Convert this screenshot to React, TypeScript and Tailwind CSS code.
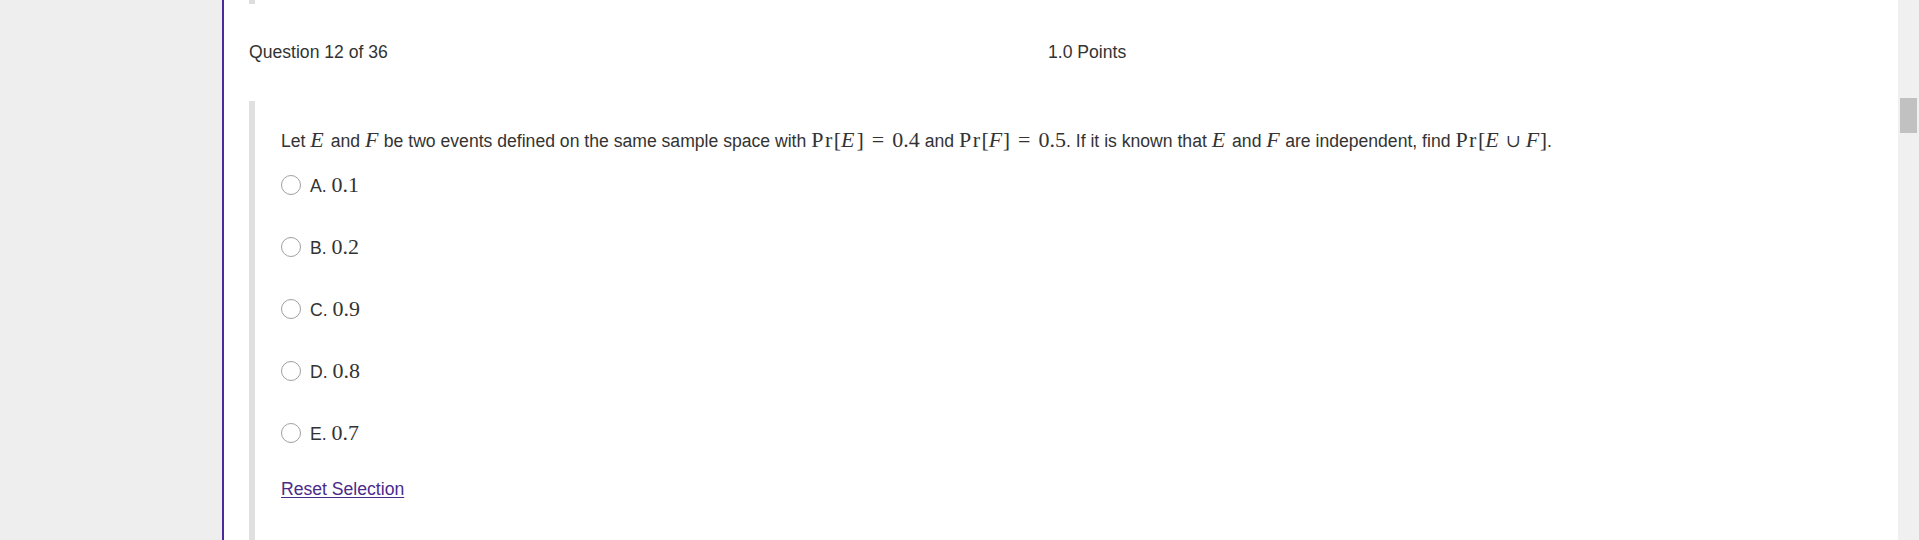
import React from "react";

const serif = "font-['Liberation_Serif',serif]";

function V({ children, wide }: { children: React.ReactNode; wide?: boolean }) {
  return (
    <span className={`${serif} italic text-[22px] leading-none ${wide ? "pr-[2px]" : "pr-[0.5px]"}`}>
      {children}
    </span>
  );
}

function R({ children }: { children: React.ReactNode }) {
  return <span className={`${serif} text-[22px] leading-none`}>{children}</span>;
}

function Pr({ children }: { children: React.ReactNode }) {
  return (
    <R>
      <span className="tracking-[1.5px]">Pr</span>[{children}]
    </R>
  );
}

function Eq({ value }: { value: string }) {
  return (
    <R>
      <span className="mx-[8px]">=</span>
      {value}
    </R>
  );
}

const options = [
  { letter: "A", value: "0.1" },
  { letter: "B", value: "0.2" },
  { letter: "C", value: "0.9" },
  { letter: "D", value: "0.8" },
  { letter: "E", value: "0.7" },
];

export default function App() {
  return (
    <div className="flex h-[540px] w-full overflow-hidden bg-white font-['Liberation_Sans',Arial,sans-serif] text-[17.6px] text-[#333333]">
      <aside className="w-[224px] shrink-0 border-r-2 border-[#4b2a9c] bg-[#eeeeee]" />

      <main className="flex-1 pl-[25px]">
        <div className="h-[4px] w-[6px] bg-[#dddddd]" />

        <div className="mt-[38px] flex leading-[20px]">
          <div className="w-[799px]">Question 12 of 36</div>
          <div>1.0 Points</div>
        </div>

        <section className="mt-[39px] h-[500px] border-l-[6px] border-[#e0e0e0] pl-[26px] pt-[28px]">
          <p className="leading-[24px] whitespace-nowrap">
            Let <V wide>E</V> and <V>F</V> be two events defined on the same sample space with{" "}
            <Pr><V wide>E</V></Pr>
            <Eq value="0.4" /> and{" "}
            <Pr><V>F</V></Pr>
            <Eq value="0.5" />. If it is known that <V wide>E</V> and <V>F</V> are independent, find{" "}
            <Pr>
              <V wide>E</V>
              <span className="mx-[5px] font-['DejaVu_Serif',serif] text-[18px] not-italic">∪</span>
              <V>F</V>
            </Pr>
            .
          </p>

          <div className="mt-[1px]">
            {options.map((o) => (
              <label key={o.letter} className="flex h-[62px] cursor-pointer items-center">
                <span className="h-[20px] w-[20px] rounded-full border border-[#a0a0a0] bg-white" />
                <span className="ml-[9px] leading-[20px]">
                  {o.letter}. <R>{o.value}</R>
                </span>
              </label>
            ))}
          </div>

          <a href="#" className="mt-[15px] block w-fit leading-[20px] text-[#4b2a8a] underline underline-offset-[2px]">
            Reset Selection
          </a>
        </section>
      </main>

      <div className="w-[21px] shrink-0 bg-[#f0f0f0] pl-[2px] pt-[98px]">
        <div className="h-[35px] w-[17px] bg-[#c1c1c1]" />
      </div>
    </div>
  );
}
